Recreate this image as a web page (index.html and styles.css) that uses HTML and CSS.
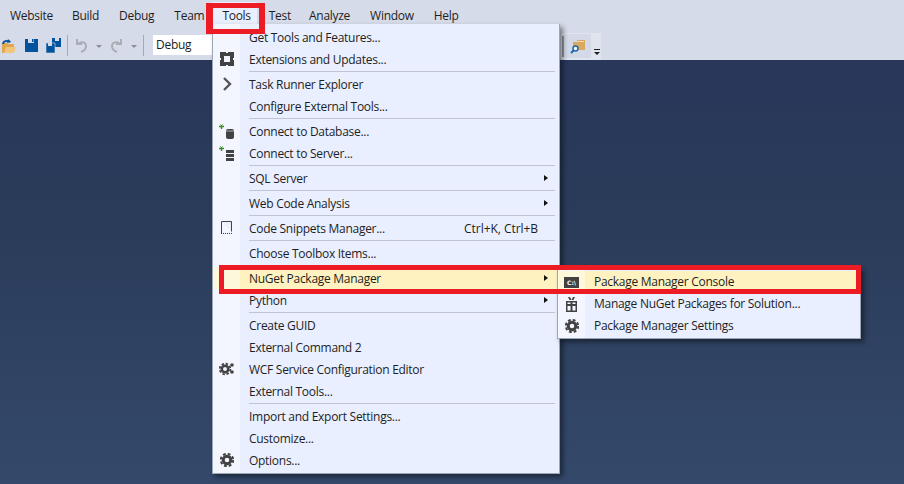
FILE: index.html
```html
<!DOCTYPE html>
<html lang="en">
<head>
<meta charset="utf-8">
<title>Tools menu</title>
<link rel="stylesheet" href="styles.css">
</head>
<body>
<svg class="defs" width="0" height="0" aria-hidden="true">
  <defs>
    <g id="gear">
      <circle cx="7" cy="7" r="6.200" fill="none" stroke="currentColor" stroke-width="2" stroke-dasharray="2.800 2.070"/>
      <circle cx="7" cy="7" r="3.800" fill="none" stroke="currentColor" stroke-width="3"/>
    </g>
  </defs>
</svg>
<div class="app">
  <nav class="menubar">
    <span class="mi mi-website">Website</span>
    <span class="mi mi-build">Build</span>
    <span class="mi mi-debug">Debug</span>
    <span class="mi mi-team">Team</span>
    <span class="mi mi-tools">Tools</span>
    <span class="mi mi-test">Test</span>
    <span class="mi mi-analyze">Analyze</span>
    <span class="mi mi-window">Window</span>
    <span class="mi mi-help">Help</span>
  </nav>
  <div class="toolbar">
    <svg class="tb-open" width="16" height="16" viewBox="0 0 16 16"><path d="M1 5h5l1 1h6v9H1z" fill="#e0a650"/><path d="M3 15l2-6h10l-2 6z" fill="#f0c67e"/><path d="M2 6a4 3 0 0 1 7-2" fill="none" stroke="#00539c" stroke-width="1.800"/><path d="M7 1l3 3-4 1z" fill="#00539c"/></svg>
    <svg class="tb-save" width="13" height="13" viewBox="0 0 13 13"><path d="M0 0h13v13H0z" fill="#00539c"/><path d="M3 0h6v4H3z" fill="#d6dbe9"/><path d="M7 0h1.500v3H7z" fill="#00539c"/></svg>
    <svg class="tb-saveall" width="15" height="15" viewBox="0 0 15 15"><path d="M6 0h9v9H6z" fill="#00539c"/><path d="M9 0h4v3H9z" fill="#d6dbe9"/><path d="M0 5h9v10H0z" fill="#00539c" stroke="#d6dbe9" stroke-width=".6"/><path d="M2 5h4v3H2z" fill="#d6dbe9"/></svg>
    <span class="tb-sep tb-sep-a"></span>
    <svg class="tb-undo" width="13" height="15" viewBox="0 0 13 15"><path d="M2 1v5h5" fill="none" stroke="#a9adb6" stroke-width="2"/><path d="M3 6c3-3 8-2 8 2 0 3-2 5-5 6" fill="none" stroke="#a9adb6" stroke-width="2"/></svg>
    <span class="tri tri-undo"></span>
    <svg class="tb-redo" width="13" height="15" viewBox="0 0 13 15"><path d="M11 1v5H6" fill="none" stroke="#a9adb6" stroke-width="2"/><path d="M10 6C7 3 2 4 2 8c0 3 2 5 5 6" fill="none" stroke="#a9adb6" stroke-width="2"/></svg>
    <span class="tri tri-redo"></span>
    <span class="tb-sep tb-sep-b"></span>
    <span class="combo">Debug<span class="tri tri-dark"></span></span>
    <span class="tb-end">
      <span class="tb-grip"></span>
      <span class="tb-hover">
        <svg width="15" height="15" viewBox="0 0 15 15"><path d="M3 3h4V1h8v10H3z" fill="#dba85f"/><path d="M7 2h7v1H7z" fill="#f0d9b4"/><circle cx="5.500" cy="9.500" r="2.500" fill="#fff" stroke="#1b6ab0" stroke-width="1.500"/><path d="M3.500 11.500L1 14" stroke="#1b6ab0" stroke-width="2"/></svg>
      </span>
      <span class="overflow"><span class="of-bar"></span><span class="of-tri"></span></span>
    </span>
  </div>
  <main class="workspace"></main>
</div>

<div class="menu tools-menu">
  <div class="row"><span class="ic"></span><span class="lbl">Get Tools and Features...</span></div>
  <div class="row"><span class="ic"><svg width="14" height="14" viewBox="0 0 14 14"><path d="M0 0h14v14H0z" fill="#424242"/><path d="M3.500 3.500h7v7h-7z" fill="#f3f6fe" stroke="#424242"/><path d="M5 2h4v2H5zM5 10h4v2H5zM2 5h2v4H2zM10 5h2v4h-2z" fill="#424242"/><path d="M6 0h2v1H6zM6 13h2v1H6zM0 6h1v2H0zM13 6h1v2h-1z" fill="#f3f6fe"/></svg></span><span class="lbl">Extensions and Updates...</span></div>
  <div class="sep"></div>
  <div class="row"><span class="ic"><svg width="14" height="14" viewBox="0 0 14 14"><path d="M4 1l6 6-6 6" fill="none" stroke="#555" stroke-width="2.400"/></svg></span><span class="lbl">Task Runner Explorer</span></div>
  <div class="row"><span class="ic"></span><span class="lbl">Configure External Tools...</span></div>
  <div class="sep"></div>
  <div class="row"><span class="ic"><svg width="15" height="15" viewBox="0 0 15 15"><path d="M1 0h1M3 0h1" stroke="#3d8a22" fill="none"/><path d="M0 2.500h5M2.500 1v4" stroke="#3d8a22" stroke-width="1.400" fill="none"/><rect x="7" y="5" width="8" height="10" rx="2" fill="#424242"/><path d="M7 7h8" stroke="#f3f6fe" stroke-width=".6"/></svg></span><span class="lbl">Connect to Database...</span></div>
  <div class="row"><span class="ic"><svg width="15" height="15" viewBox="0 0 15 15"><path d="M1 0h1M3 0h1" stroke="#3d8a22" fill="none"/><path d="M0 2.500h5M2.500 1v4" stroke="#3d8a22" stroke-width="1.400" fill="none"/><path d="M7 4h8v3H7zM7 8h8v3H7zM7 12h8v3H7z" fill="#424242"/></svg></span><span class="lbl">Connect to Server...</span></div>
  <div class="sep"></div>
  <div class="row"><span class="ic"></span><span class="lbl">SQL Server</span><span class="arrow"></span></div>
  <div class="sep"></div>
  <div class="row"><span class="ic"></span><span class="lbl">Web Code Analysis</span><span class="arrow"></span></div>
  <div class="sep"></div>
  <div class="row"><span class="ic"><svg width="12" height="14" viewBox="0 0 12 14"><path d="M.5.500h10v10" fill="#eeeff8" stroke="#424242"/><path d="M.5.500v12" stroke="#424242" fill="none"/><path d="M1 11h10v2H1z" fill="#eeeff8"/><path d="M0 12.500h11" stroke="#424242" stroke-dasharray="1 1"/></svg></span><span class="lbl">Code Snippets Manager...</span><span class="kbd">Ctrl+K, Ctrl+B</span></div>
  <div class="sep"></div>
  <div class="row"><span class="ic"></span><span class="lbl">Choose Toolbox Items...</span></div>
  <div class="sep"></div>
  <div class="row row-active"><span class="ic"></span><span class="lbl">NuGet Package Manager</span><span class="arrow"></span></div>
  <div class="row"><span class="ic"></span><span class="lbl">Python</span><span class="arrow"></span></div>
  <div class="sep"></div>
  <div class="row"><span class="ic"></span><span class="lbl">Create GUID</span></div>
  <div class="row"><span class="ic"></span><span class="lbl">External Command 2</span></div>
  <div class="row"><span class="ic"><svg class="gear" width="15" height="14" viewBox="0 0 15 14"><use href="#gear" transform="translate(0 1) scale(.86)"/><circle cx="13" cy="3" r="1.800" fill="#424242"/><circle cx="13" cy="10" r="1.800" fill="#424242"/></svg></span><span class="lbl">WCF Service Configuration Editor</span></div>
  <div class="row"><span class="ic"></span><span class="lbl">External Tools...</span></div>
  <div class="sep"></div>
  <div class="row"><span class="ic"></span><span class="lbl">Import and Export Settings...</span></div>
  <div class="row"><span class="ic"></span><span class="lbl">Customize...</span></div>
  <div class="row"><span class="ic"><svg class="gear" width="14" height="14" viewBox="0 0 14 14"><use href="#gear"/></svg></span><span class="lbl">Options...</span></div>
</div>

<div class="menu sub-menu">
  <div class="row row-active"><span class="ic"><svg width="15" height="11" viewBox="0 0 15 11"><path d="M0 0h15v11H0z" fill="#424242"/><text class="cmd" x="3" y="7.500">C:\</text></svg></span><span class="lbl">Package Manager Console</span></div>
  <div class="row"><span class="ic"><svg width="11" height="15" viewBox="0 0 11 15"><path d="M0 4h11v11H0z" fill="#424242"/><path d="M1.500 5.500h3v1.500h-3zM6.500 5.500h3v1.500h-3zM1.500 9h3v4.500h-3zM6.500 9h3v4.500h-3z" fill="#f3f6fe"/><path d="M2 0h2l1.500 3h-2zM9 0H7L5.500 3h2z" fill="#424242"/></svg></span><span class="lbl">Manage NuGet Packages for Solution...</span></div>
  <div class="row"><span class="ic"><svg class="gear" width="14" height="14" viewBox="0 0 14 14"><use href="#gear"/></svg></span><span class="lbl">Package Manager Settings</span></div>
</div>

<div class="callout callout-tools"></div>
<div class="callout callout-nuget"></div>
</body>
</html>
```

FILE: styles.css
```css
* { box-sizing: border-box; }
html, body { margin: 0; height: 100%; overflow: hidden; }
body {
  font-family: "Open Sans", "Noto Sans", sans-serif;
  font-size: 12px;
  letter-spacing: -0.28px;
  color: #1e1e1e;
  background: #283752;
}
.defs { position: absolute; }

.app { height: 484px; display: flex; flex-direction: column; }

.menubar { height: 33px; background: #d6dbe9; display: flex; align-items: flex-start; padding-top: 7px; }
.mi { line-height: 17px; white-space: nowrap; }
.mi-website { margin-left: 10px; }
.mi-build { margin-left: 19px; }
.mi-debug { margin-left: 20px; }
.mi-team { margin-left: 20px; }
.mi-tools { margin-left: 18px; }
.mi-test { margin-left: 18px; }
.mi-analyze { margin-left: 18px; }
.mi-window { margin-left: 20px; }
.mi-help { margin-left: 20px; }

.toolbar { height: 27px; background: #d6dbe9; display: flex; align-items: center; padding-left: 1px; }
.tb-open { margin-top: -2px; }
.tb-save { margin-left: 8px; margin-top: -2px; }
.tb-saveall { margin-left: 8px; margin-top: -2px; }
.tb-sep { width: 1px; height: 21px; background: #a3a9b5; margin-top: -3px; }
.tb-sep-a { margin-left: 6px; }
.tb-undo { margin-left: 7px; margin-top: -2px; }
.tri { width: 0; height: 0; border: 3px solid transparent; border-top-color: #8c8f96; border-bottom: 0; }
.tri-undo { margin-left: 8px; }
.tb-redo { margin-left: 8px; margin-top: -2px; }
.tri-redo { margin-left: 8px; }
.tb-sep-b { margin-left: 6px; }
.combo { width: 66px; height: 20px; margin-left: 9px; margin-top: -3px; background: #fff; display: flex; align-items: center; padding-left: 3px; line-height: 18px; }
.tri-dark { border-top-color: #1e1e1e; margin-left: 21px; }
.tb-end { width: 40px; height: 27px; margin-left: 342px; background: #dfe4ef; display: flex; align-items: flex-start; }
.tb-grip { width: 2px; height: 21px; background: #8f95a1; margin: 3px 0 0 1px; }
.tb-hover { width: 27px; height: 24px; margin-top: 1px; background: #d3d9e6; display: flex; align-items: center; justify-content: center; }
.overflow { margin: 16px 0 0 3px; display: flex; flex-direction: column; align-items: center; width: 6px; }
.of-bar { width: 6px; height: 1px; background: #1e1e1e; }
.of-tri { width: 0; height: 0; margin-top: 2px; border: 3px solid transparent; border-top-color: #1e1e1e; border-bottom: 0; }

.workspace { flex: 1; background: linear-gradient(#28375a 0%, #2b3c5a 40%, #34496b 100%); }

.menu {
  position: absolute;
  background: linear-gradient(90deg, #f3f6fe 27px, #e9effe 27px);
  border: 1px solid #9ba7b7;
  padding: 2px 0;
  box-shadow: 3px 3px 5px rgba(0, 0, 0, .45);
}
.tools-menu { left: 212px; top: 24px; width: 348px; height: 450px; border-top: 0; }
.sub-menu { left: 557px; top: 267px; width: 304px; padding: 3px 0 1px; }

.row { height: 22px; display: flex; align-items: center; position: relative; white-space: nowrap; }
.ic { width: 27px; height: 22px; flex: none; display: flex; align-items: center; justify-content: center; color: #424242; }
.lbl { margin-left: 9px; padding-top: 2px; line-height: 20px; }
.kbd { margin-left: auto; margin-right: 21px; padding-top: 2px; line-height: 20px; letter-spacing: -0.05px; }
.sub-menu .lbl { padding-top: 0; line-height: 22px; }
.arrow { position: absolute; right: 11px; top: 8px; width: 0; height: 0; border: 3.500px solid transparent; border-left: 4px solid #111; border-right: 0; }
.row-active { background: #fef3c0; }
.row-active .ic { background: #fdf8dc; }
.sep { height: 3px; margin-left: 36px; margin-right: 4px; background: linear-gradient(transparent 1px, #bfc3d2 1px, #bfc3d2 2px, transparent 2px); }
.cmd { font: 700 6px "DejaVu Sans", sans-serif; fill: #fff; letter-spacing: 0; }

.callout { position: absolute; border: 5px solid #ed1c24; pointer-events: none; }
.callout-tools { left: 206px; top: 3px; width: 59px; height: 31px; border-width: 5px 6px 5px 7px; }
.callout-nuget { left: 219px; top: 265px; width: 642px; height: 29px; }

.mi-tools { position: relative; z-index: 0; }
.mi-tools::before { content: ""; position: absolute; z-index: -1; left: -10px; right: -6px; top: -5px; height: 24px; background: #e9effe; }
```
